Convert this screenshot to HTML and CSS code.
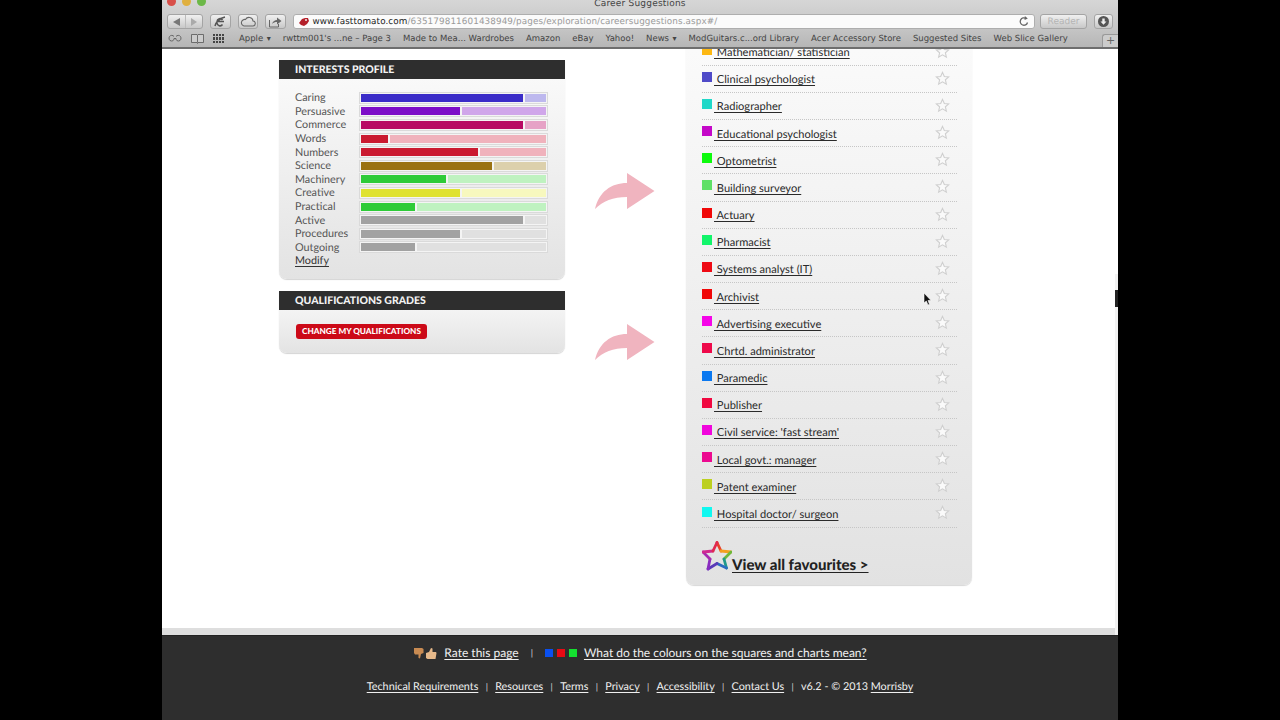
FILE: index.html
```html
<!DOCTYPE html>
<html lang="en">
<head>
<meta charset="utf-8">
<title>Career Suggestions</title>
<link rel="stylesheet" href="styles.css">
</head>
<body>
<svg class="defs" width="0" height="0" aria-hidden="true">
  <symbol id="fav" viewBox="0 0 24 24"><path d="M12 2.2l2.900 6.500 7 .7-5.300 4.700 1.600 6.900-6.200-3.600-6.200 3.600 1.600-6.900-5.300-4.700 7-.7z" fill="#fafafa" stroke="#cfcfcf" stroke-width="1.800"/></symbol>
  <symbol id="arrow" viewBox="0 0 60 37"><path d="M59.500 19 32 1v10C16 11 4 20 0 37c8-8 18-12 32-12v12z" fill="#f0b4bf"/></symbol>
</svg>
<div class="screen">
  <header class="chrome">
    <div class="titlebar">
      <div class="lights"><i class="light red"></i><i class="light yellow"></i><i class="light green"></i></div>
      <span class="wintitle">Career Suggestions</span>
    </div>
    <div class="navbar">
      <div class="btn backfwd"><span class="tri-l"></span><span class="sep"></span><span class="tri-r"></span></div>
      <div class="btn small">
        <svg width="14" height="13" viewBox="0 0 14 13"><path d="M11 6.500H4a3 3 0 0 1 5.500-1.500M4 8a3 3 0 0 0 5.500 1.500M2 11c1-4 5-8 10-9" fill="none" stroke="#555" stroke-width="1.500"/></svg>
      </div>
      <div class="btn small">
        <svg width="16" height="11" viewBox="0 0 16 11"><path d="M4 10h8.500a2.500 2.500 0 0 0 .5-5 4 4 0 0 0-7.500-1.500A3.300 3.300 0 0 0 4 10z" fill="none" stroke="#666" stroke-width="1.100"/></svg>
      </div>
      <div class="btn small">
        <svg width="14" height="12" viewBox="0 0 14 12"><path d="M1.500 4v7h9V8" fill="none" stroke="#666"/><path d="M4 8c1-3 3-4 5-4V1.500L13.500 5 9 8.500V6C7 6 5.500 6.500 4 8z" fill="#666"/></svg>
      </div>
      <div class="urlfield">
        <svg class="favicon" width="12" height="10" viewBox="0 0 12 10"><path d="M1 6l3-4 3-1 3 0 1 3-2 3-3 2-3-1z" fill="#b4202a"/><circle cx="8" cy="3" r="1" fill="#eee"/></svg>
        <span class="url"><b>www.fasttomato.com</b>/635179811601438949/pages/exploration/careersuggestions.aspx#/</span>
        <svg class="reload" width="10" height="11" viewBox="0 0 10 11"><path d="M8.500 6.500A3.700 3.700 0 1 1 7 2.500" fill="none" stroke="#666" stroke-width="1.300"/><path d="M5.800 0l3 2.500-3.200 1.500z" fill="#666"/></svg>
      </div>
      <div class="btn reader">Reader</div>
      <div class="btn download">
        <svg width="11" height="11" viewBox="0 0 11 11"><circle cx="5.500" cy="5.500" r="5.500" fill="#555"/><path d="M4.300 2.500h2.400v3h1.800L5.500 8.700 2.500 5.500h1.800z" fill="#eee"/></svg>
      </div>
    </div>
    <div class="bookmarks">
      <div class="bm-icons">
        <svg width="14" height="9" viewBox="0 0 14 9"><path d="M6 2.500C5 1 2.500 1 1.500 2.500S1 7 3.500 7 6 5 6 4.500h2C8 5 8 7 10.500 7s3-3 2-4.500S9 1 8 2.500" fill="none" stroke="#666"/></svg>
        <svg width="13" height="10" viewBox="0 0 13 10"><path d="M.5.500h5.500l.5 1 .5-1h5.500v8h-5.500l-.5 1-.5-1H.5zM6.500 1.500v7" fill="#ccc" stroke="#555" stroke-width=".8"/></svg>
        <div class="grid9"><i></i><i></i><i></i><i></i><i></i><i></i><i></i><i></i><i></i><i></i><i></i><i></i></div>
      </div>
      <nav class="bm-links">
        <span class="drop">Apple</span>
        <span>rwttm001's ...ne – Page 3</span>
        <span>Made to Mea... Wardrobes</span>
        <span>Amazon</span>
        <span>eBay</span>
        <span>Yahoo!</span>
        <span class="drop">News</span>
        <span>ModGuitars.c...ord Library</span>
        <span>Acer Accessory Store</span>
        <span>Suggested Sites</span>
        <span>Web Slice Gallery</span>
      </nav>
      <div class="newtab">+</div>
    </div>
  </header>

  <div class="page">
    <main class="content">
      <div class="leftcol">
        <section class="panel">
          <h2 class="panel-head">INTERESTS PROFILE</h2>
          <div class="interests">
            <div class="irow"><span class="ilabel">Caring</span><div class="track"><i class="fill c-blue" style="width:162px"></i><i class="rest c-blue-l"></i></div></div>
            <div class="irow"><span class="ilabel">Persuasive</span><div class="track"><i class="fill c-purple" style="width:99px"></i><i class="rest c-purple-l"></i></div></div>
            <div class="irow"><span class="ilabel">Commerce</span><div class="track"><i class="fill c-mag" style="width:162px"></i><i class="rest c-mag-l"></i></div></div>
            <div class="irow"><span class="ilabel">Words</span><div class="track"><i class="fill c-red" style="width:27px"></i><i class="rest c-red-l"></i></div></div>
            <div class="irow"><span class="ilabel">Numbers</span><div class="track"><i class="fill c-red" style="width:117px"></i><i class="rest c-red-l"></i></div></div>
            <div class="irow"><span class="ilabel">Science</span><div class="track"><i class="fill c-brown" style="width:131px"></i><i class="rest c-brown-l"></i></div></div>
            <div class="irow"><span class="ilabel">Machinery</span><div class="track"><i class="fill c-green" style="width:85px"></i><i class="rest c-green-l"></i></div></div>
            <div class="irow"><span class="ilabel">Creative</span><div class="track"><i class="fill c-yellow" style="width:99px"></i><i class="rest c-yellow-l"></i></div></div>
            <div class="irow"><span class="ilabel">Practical</span><div class="track"><i class="fill c-green" style="width:54px"></i><i class="rest c-green-l"></i></div></div>
            <div class="irow"><span class="ilabel">Active</span><div class="track"><i class="fill c-grey" style="width:162px"></i><i class="rest c-grey-l"></i></div></div>
            <div class="irow"><span class="ilabel">Procedures</span><div class="track"><i class="fill c-grey" style="width:99px"></i><i class="rest c-grey-l"></i></div></div>
            <div class="irow"><span class="ilabel">Outgoing</span><div class="track"><i class="fill c-grey" style="width:54px"></i><i class="rest c-grey-l"></i></div></div>
            <a class="modify" href="#">Modify</a>
          </div>
        </section>
        <section class="panel">
          <h2 class="panel-head">QUALIFICATIONS GRADES</h2>
          <div class="quals"><a class="redbtn" href="#">CHANGE MY QUALIFICATIONS</a></div>
        </section>
      </div>

      <div class="arrows">
        <svg class="arrow" viewBox="0 0 60 37"><use href="#arrow"/></svg>
        <svg class="arrow" viewBox="0 0 60 37"><use href="#arrow"/></svg>
      </div>

      <section class="favs">
        <ul class="favlist">
          <li><i class="sq" style="background:#fdb813"></i><a href="#">&nbsp;Mathematician/ statistician</a><svg class="star"><use href="#fav"/></svg></li>
          <li><i class="sq" style="background:#4f4bc8"></i><a href="#">&nbsp;Clinical psychologist</a><svg class="star"><use href="#fav"/></svg></li>
          <li><i class="sq" style="background:#1fd8c8"></i><a href="#">&nbsp;Radiographer</a><svg class="star"><use href="#fav"/></svg></li>
          <li><i class="sq" style="background:#c408c8"></i><a href="#">&nbsp;Educational psychologist</a><svg class="star"><use href="#fav"/></svg></li>
          <li><i class="sq" style="background:#0dfb0d"></i><a href="#">&nbsp;Optometrist</a><svg class="star"><use href="#fav"/></svg></li>
          <li><i class="sq" style="background:#5fe066"></i><a href="#">&nbsp;Building surveyor</a><svg class="star"><use href="#fav"/></svg></li>
          <li><i class="sq" style="background:#f00808"></i><a href="#">&nbsp;Actuary</a><svg class="star"><use href="#fav"/></svg></li>
          <li><i class="sq" style="background:#12f56a"></i><a href="#">&nbsp;Pharmacist</a><svg class="star"><use href="#fav"/></svg></li>
          <li><i class="sq" style="background:#ee0a14"></i><a href="#">&nbsp;Systems analyst (IT)</a><svg class="star"><use href="#fav"/></svg></li>
          <li><i class="sq" style="background:#f00808"></i><a href="#">&nbsp;Archivist</a><svg class="star"><use href="#fav"/></svg></li>
          <li><i class="sq" style="background:#f505e8"></i><a href="#">&nbsp;Advertising executive</a><svg class="star"><use href="#fav"/></svg></li>
          <li><i class="sq" style="background:#ee0a4a"></i><a href="#">&nbsp;Chrtd. administrator</a><svg class="star"><use href="#fav"/></svg></li>
          <li><i class="sq" style="background:#0a78f0"></i><a href="#">&nbsp;Paramedic</a><svg class="star"><use href="#fav"/></svg></li>
          <li><i class="sq" style="background:#f00840"></i><a href="#">&nbsp;Publisher</a><svg class="star"><use href="#fav"/></svg></li>
          <li><i class="sq" style="background:#f005dc"></i><a href="#">&nbsp;Civil service: 'fast stream'</a><svg class="star"><use href="#fav"/></svg></li>
          <li><i class="sq" style="background:#ec0a90"></i><a href="#">&nbsp;Local govt.: manager</a><svg class="star"><use href="#fav"/></svg></li>
          <li><i class="sq" style="background:#bcd020"></i><a href="#">&nbsp;Patent examiner</a><svg class="star"><use href="#fav"/></svg></li>
          <li><i class="sq" style="background:#10f8f0"></i><a href="#">&nbsp;Hospital doctor/ surgeon</a><svg class="star"><use href="#fav"/></svg></li>
        </ul>
        <div class="viewall">
          <svg class="rainbow" width="30" height="30" viewBox="0 0 30 30" fill="none" stroke-width="2.800" stroke-linejoin="round" stroke-linecap="round">
            <path d="M15 1.500 19 10" stroke="#e8402a"/><path d="M19 10 29 11" stroke="#f2a01e"/><path d="M29 11 22 18" stroke="#6db83a"/><path d="M22 18 24.500 27" stroke="#1e9a8a"/><path d="M24.500 27 15 22.500" stroke="#2a6cc0"/><path d="M15 22.500 6 28" stroke="#5a3ab8"/><path d="M6 28 8 18" stroke="#8a2cc0"/><path d="M8 18 1 11" stroke="#a82ab0"/><path d="M1 11 11 10" stroke="#d02a90"/><path d="M11 10 15 1.500" stroke="#e02a50"/>
          </svg>
          <a href="#">View all favourites &gt;</a>
        </div>
      </section>
    </main>

    <div class="band"></div>
    <footer class="footer">
      <div class="f-row f-top">
        <svg class="thumbs" width="24" height="13" viewBox="0 0 24 13"><path d="M1 1h8l1.500 1v4L8 7l-1 4.500-1.500-.5V7.500H2L1 6z" fill="#c98b52"/><path d="M13 6l3-1 2-4 1.500.5V5h3.500l.5 1-1 6h-8l-1.500-1z" fill="#e6b98a"/></svg>
        <a href="#">Rate this page</a>
        <span class="pipe">|</span>
        <span class="keys"><i class="key k-b"></i><i class="key k-r"></i><i class="key k-g"></i></span>
        <a href="#">What do the colours on the squares and charts mean?</a>
      </div>
      <div class="f-row f-bot">
        <a href="#">Technical Requirements</a><span class="pipe">|</span>
        <a href="#">Resources</a><span class="pipe">|</span>
        <a href="#">Terms</a><span class="pipe">|</span>
        <a href="#">Privacy</a><span class="pipe">|</span>
        <a href="#">Accessibility</a><span class="pipe">|</span>
        <a href="#">Contact Us</a><span class="pipe">|</span>
        <span class="ver">v6.2 - © 2013 <a href="#">Morrisby</a></span>
      </div>
    </footer>
    <div class="scrollstrip"></div>
    <div class="scrollthumb"></div>
    <svg class="cursor" width="9" height="14" viewBox="0 0 9 14"><path d="M1 1v10l2.300-2 1.700 4 1.500-.7L5 8.500h3z" fill="#111" stroke="#fff" stroke-width=".6"/></svg>
  </div>
</div>
</body>
</html>
```
FILE: styles.css
```css
* { box-sizing: border-box; }
html, body { margin: 0; height: 100%; }
body { background: #000; display: flex; justify-content: center; overflow: hidden; font-family: Lato, "Open Sans", "Liberation Sans", sans-serif; text-rendering: geometricPrecision; }
.defs { position: absolute; }
.screen { width: 956px; height: 720px; display: flex; flex-direction: column; background: #fff; }

/* Browser chrome */
.chrome { height: 49px; flex: none; display: flex; flex-direction: column; font-family: "DejaVu Sans", sans-serif; background: linear-gradient(#d6d6d6, #c6c6c6 58%, #b6b6b6); border-bottom: 2px solid #6e6e6e; }
.titlebar { height: 13px; position: relative; display: flex; justify-content: center; overflow: hidden; flex: none; }
.lights { position: absolute; left: 4.500px; top: -3px; display: flex; gap: 6px; }
.light { width: 9px; height: 9px; border-radius: 50%; display: block; }
.red { background: #d8504a; } .yellow { background: #e0b040; } .green { background: #6cb848; }
.wintitle { font-size: 9px; line-height: 8px; color: #444; letter-spacing: .2px; }
.navbar { height: 17px; flex: none; display: flex; align-items: center; padding-left: 5px; gap: 7px; position: relative; }
.btn { height: 15px; border: 1px solid #a4a4a4; border-radius: 3px; background: linear-gradient(#f0f0f0, #c8c8c8); display: flex; align-items: center; justify-content: center; flex: none; }
.backfwd { width: 36px; gap: 5px; }
.tri-l { border: 4px solid transparent; border-right: 7px solid #777; border-left: 0; }
.tri-r { border: 4px solid transparent; border-left: 6px solid #aaa; border-right: 0; }
.sep { width: 1px; height: 13px; background: #bbb; }
.small { width: 20.500px; }
.urlfield { width: 742px; height: 15px; background: #fbfbfb; border: 1px solid #aeaeae; border-radius: 3px; display: flex; align-items: center; padding: 0 5px 0 4px; gap: 2px; flex: none; }
.url { flex: 1; font-size: 8.800px; color: #9a9a9a; white-space: nowrap; overflow: hidden; letter-spacing: .1px; padding-left: 1px; }
.url b { font-weight: 400; color: #222; }
.reader { width: 47px; margin-left: -1.500px; font-size: 9px; color: #b4b4b4; }
.download { width: 19px; }
.bookmarks { flex: 1; display: flex; align-items: center; position: relative; padding-left: 6px; }
.bm-icons { display: flex; align-items: center; gap: 9px; width: 71px; flex: none; }
.grid9 { width: 12px; height: 9px; display: grid; grid-template-columns: repeat(4, 2px); gap: 1px; }
.grid9 i { background: #444; display: block; }
.bm-links { display: flex; gap: 12px; font-size: 8.500px; color: #444; font-weight: 400; white-space: nowrap; padding-top: 1px; }
.drop::after { content: "▾"; margin-left: 3.500px; font-size: 8px; }
.newtab { position: absolute; right: 0; bottom: 0; width: 16px; height: 13px; border: 1px solid #999; border-bottom: 0; border-right: 0; border-radius: 3px 0 0 0; background: #ccc; font-size: 11px; line-height: 12px; text-align: center; color: #666; }

/* Page */
.page { flex: 1; position: relative; overflow: hidden; display: flex; flex-direction: column; background: #fff; }
.content { height: 579px; flex: none; padding-left: 117px; display: grid; grid-template-columns: 286px 121px 286px; align-items: start; }
.leftcol { display: flex; flex-direction: column; gap: 12px; padding-top: 11px; }
.panel { border-radius: 0 0 8px 8px; background: linear-gradient(#fbfbfb, #e3e3e3); box-shadow: 0 1px 1px #d4d4d4; }
.panel-head { margin: 0; height: 19px; padding-left: 16px; background: #2e2e2e; color: #f2f2f2; font-size: 10.500px; line-height: 20px; font-weight: 900; }
.interests { padding: 12px 16px 0; height: 200px; }
.irow { height: 13.600px; display: flex; align-items: center; }
.ilabel { width: 64px; flex: none; font-size: 10.800px; color: #555; line-height: 13px; }
.track { width: 189px; height: 12px; flex: none; border: 1px solid #dadada; background: #f4f4f4; display: flex; gap: 2px; padding: 1px; }
.fill, .rest { display: block; height: 8px; }
.fill { flex: none; }
.rest { flex: 1; }
.c-blue { background: #3a2cc8; } .c-blue-l { background: #bdb8ee; }
.c-purple { background: #7d0ec8; } .c-purple-l { background: #d0a6ea; }
.c-mag { background: #b80a64; } .c-mag-l { background: #e6a2c6; }
.c-red { background: #ca1a30; } .c-red-l { background: #f0b2bc; }
.c-brown { background: #9a7212; } .c-brown-l { background: #dcd0ac; }
.c-green { background: #2ecb38; } .c-green-l { background: #bff2c0; }
.c-yellow { background: #dfe230; } .c-yellow-l { background: #f7f8be; }
.c-grey { background: #a2a2a2; } .c-grey-l { background: #e0e0e0; }
.modify { display: block; font-size: 10.800px; line-height: 13px; color: #333; margin-top: 0; text-underline-offset: 2px; }
.quals { height: 43px; padding: 14px 17px 0; }
.redbtn { display: block; width: 131px; height: 15px; background: #cc0a18; border-radius: 3px; color: #fff; font-size: 8.200px; font-weight: 900; line-height: 15px; text-align: center; text-decoration: none; white-space: nowrap; }

.arrows { display: flex; flex-direction: column; gap: 114px; padding: 123px 0 0 30px; }
.arrow { width: 60px; height: 37px; display: block; }

/* Favourites */
.favs { margin-top: -20px; height: 556px; border-radius: 0 0 8px 8px; background: linear-gradient(#fbfbfb, #e2e2e2); box-shadow: 0 1px 1px #d8d8d8; padding: 9.500px 15px 0 16px; }
.favlist { list-style: none; margin: 0; padding: 0; }
.favlist li { height: 27.180px; border-bottom: 1px dotted #c6c6c6; display: flex; align-items: center; position: relative; padding-top: 2px; }
.sq { width: 10px; height: 10px; flex: none; display: block; margin: -6px 2px 0 0; }
.favlist a { font-size: 11.100px; color: #2a2a2a; line-height: 13px; text-underline-offset: 2px; }
.star { position: absolute; right: 7px; top: 5px; width: 15px; height: 15px; }
.viewall { display: flex; align-items: flex-end; height: 45px; }
.rainbow { flex: none; margin-bottom: 2px; }
.viewall a { font-size: 15px; font-weight: 900; color: #222; line-height: 14px; margin-bottom: 1px; text-underline-offset: 2px; }

/* Footer */
.band { height: 7px; flex: none; background: #dedede; }
.footer { flex: 1; background: #2e2e2e; color: #eee; font-size: 10.800px; border-top: 1px solid #222; }
.footer a { color: #f0f0f0; text-underline-offset: 2px; }
.f-row { display: flex; justify-content: center; align-items: center; line-height: 14px; }
.f-top { margin-top: 10px; gap: 7px; font-size: 12px; }
.f-top .pipe { margin: 0 5px; }
.f-bot { margin-top: 20px; gap: 7.300px; }
.keys { display: flex; gap: 4px; }
.key { width: 8px; height: 8px; display: block; }
.k-b { background: #0a50f0; } .k-r { background: #e80a14; } .k-g { background: #14e030; }
.pipe { color: #ddd; font-size: 9px; }
.scrollstrip { position: absolute; right: 0; top: 225px; bottom: 85px; width: 3px; background: #f2f2f2; }
.scrollthumb { position: absolute; right: 0; top: 241px; width: 3px; height: 17px; background: #222; }
.cursor { position: absolute; left: 761px; top: 243px; }
```
